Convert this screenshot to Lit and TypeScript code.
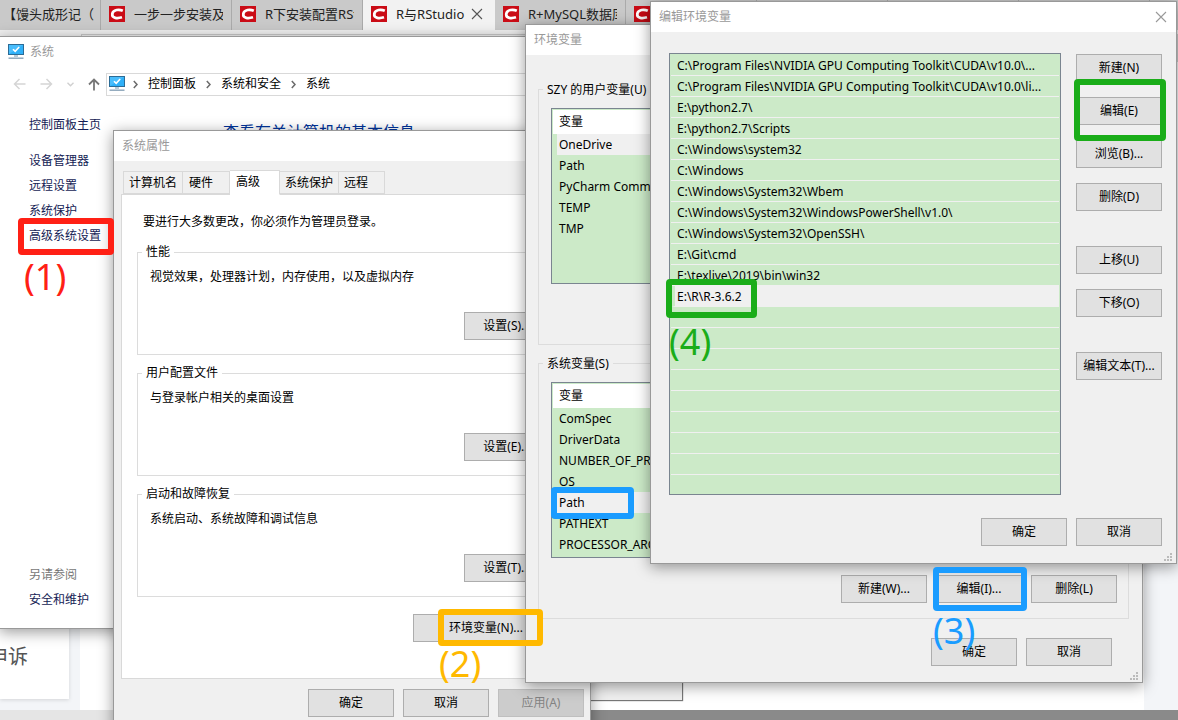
import { LitElement, html, css, svg } from "lit";
import { customElement } from "lit/decorators.js";
import { classMap } from "lit/directives/class-map.js";

const controls = css`
  * { box-sizing: border-box; }
  button { font: inherit; color: inherit; margin: 0; padding: 0; border: 0; background: none; white-space: nowrap; }
  .push { width: 86px; height: 28px; background: #e1e1e1; border: 1px solid #adadad; line-height: 24px; flex: none; }
  .push:disabled { background: #ccc; border-color: #bfbfbf; color: #838383; }
  .wide { width: 146px; }
  .title { height: 30px; background: #fff; display: flex; align-items: center; justify-content: space-between; padding: 0 9px 0 8px; color: #999; }
  h1 { font: inherit; margin: 0; }
  .row { display: flex; justify-content: flex-end; gap: 9px; }
  .grip { position: absolute; right: 3px; bottom: 1px; }
`;

const listStyle = css`
  .list { background: #cceac8; border: 1px solid #7a8590; padding: 1px; overflow: hidden; }
  .picked { background: #f0f0f0; border-left: 4px solid #cceac8; }
`;

const monitor = svg`<svg width="16" height="16" viewBox="0 0 16 16" aria-hidden="true">
  <rect x="0.5" y="0.5" width="15" height="10" fill="#2fb0f8" stroke="#2c6c96"/>
  <path d="M1 1h14L1 10z" fill="#5cc6ff" opacity=".6"/>
  <path d="M5 5.2l2.200 2.200L11.200 3" fill="none" stroke="#fff" stroke-width="1.6"/>
  <path d="M6 11h4v2H6z" fill="#b9cbd8"/><path d="M0.5 14.200h15" stroke="#8aa3b8" stroke-width="1.4"/>
</svg>`;

const csdn = svg`<svg width="16" height="16" viewBox="0 0 16 16" aria-hidden="true">
  <rect width="16" height="16" fill="#ca0c16"/>
  <path d="M13.800 4.700C10.500 3.200 4 3.200 3.300 7.800c-.7 4.800 5.400 4.800 9.700 3.500" fill="none" stroke="#fff" stroke-width="2.7"/>
</svg>`;

const crumb = svg`<svg width="5" height="9" viewBox="0 0 5 9" aria-hidden="true"><path d="M.8 1l3.200 3.500L.8 8" fill="none" stroke="#6b6b6b" stroke-width="1.5"/></svg>`;

const cross = (color: string) => svg`<svg width="12" height="12" viewBox="0 0 12 12" aria-hidden="true"><path d="M1 1l10 10M11 1L1 11" fill="none" stroke=${color} stroke-width="1.1"/></svg>`;

const grip = svg`<svg class="grip" width="9" height="9" viewBox="0 0 9 9" aria-hidden="true"><path fill="#bbb" d="M6 0h2v2H6zM3 3h2v2H3zM6 3h2v2H6zM0 6h2v2H0zM3 6h2v2H3zM6 6h2v2H6z"/></svg>`;

@customElement("browser-page")
class BrowserPage extends LitElement {
  static styles = [controls, css`
    :host { display: flex; flex-direction: column; height: 100%; background: #fff; }
    .tabs { display: flex; height: 30px; background: #c9c9c9; font-size: 13px; flex: none; overflow: hidden; }
    .tab { width: 131px; flex: none; height: 30px; display: flex; align-items: center; gap: 9px; padding: 0 8px 2px; border-right: 1px solid #aaa; color: #222; overflow: hidden; }
    .first { width: 101px; padding: 0 6px 2px 3px; }
    .active { width: 132px; background: #f2f2f2; border: 0; padding-right: 12px; }
    .label { flex: 1; overflow: hidden; text-align: left; }
    .active .label { overflow: visible; min-width: 0; }
    .tools { flex: none; height: 40px; background: #f0f0f0; padding: 4px 0 0 81px; }
    .address { height: 28px; border: 1px solid #c9c9c9; }
    .page { flex: 1; display: flex; min-height: 0; }
    .aside { width: 80px; background: #f3f5f8; padding-bottom: 11px; display: flex; }
    .card { width: 69px; background: #fff; box-shadow: 0 1px 4px #0002; display: flex; align-items: flex-end; justify-content: flex-end; padding: 0 41px 26px 0; font-size: 20px; line-height: 32px; color: #555; white-space: nowrap; }
    .article { flex: 1; display: flex; align-items: flex-end; padding: 0 0 9px 500px; }
    .frame { width: 103px; height: 60px; background: #f0f0f0; border: 1px solid #777; box-shadow: 0 0 1px #777; }
    .side { width: 34px; background: #f3f5f8; }
    .status { height: 10px; flex: none; display: flex; background: #8a8a8a; }
    .loaded { width: 30%; background: #e5e5e5; }
  `];
  render() {
    const tabs = ["一步一步安装及使用", "R下安装配置RStudio", "R与RStudio", "R+MySQL数据库", "R", "R", "R", "R"];
    return html`
      <nav class="tabs">
        <button class="tab first"><span class="label">【馒头成形记（</span></button>
        ${tabs.map((t) => html`<button class=${classMap({ tab: true, active: t === "R与RStudio" })}>
          ${csdn}<span class="label">${t}</span>${t === "R与RStudio" ? cross("#555") : ""}</button>`)}
      </nav>
      <div class="tools"><div class="address"></div></div>
      <div class="page">
        <div class="aside"><div class="card">申诉</div></div>
        <div class="article"><div class="frame"></div></div>
        <div class="side"></div>
      </div>
      <div class="status"><div class="loaded"></div></div>`;
  }
}

@customElement("system-window")
class SystemWindow extends LitElement {
  static styles = [controls, css`
    :host { display: flex; flex-direction: column; background: #fff; }
    .head { display: flex; align-items: center; gap: 6px; height: 30px; padding-left: 8px; color: #999; }
    .nav { display: flex; align-items: center; height: 34px; }
    .arrows { display: flex; align-items: center; gap: 14px; width: 106px; padding-left: 13px; }
    .path { flex: 1; height: 23px; border: 1px solid #d9d9d9; display: flex; align-items: center; gap: 10px; padding-left: 2px; line-height: 20px; }
    .lead { display: flex; align-items: center; gap: 8px; }
    .path a { color: #000; text-decoration: none; }
    .body { flex: 1; display: flex; padding: 11px 0 16px 29px; }
    .menu { width: 194px; display: flex; flex-direction: column; line-height: 25px; }
    .menu a { color: #151c55; text-decoration: none; }
    .home { margin-bottom: 11px; }
    .also { margin-top: auto; color: #777; }
    h2 { margin: 8px 0 0; font-size: 16px; font-weight: 400; line-height: 24px; color: #039; }
  `];
  render() {
    return html`
      <div class="head">${monitor}<h1>系统</h1></div>
      <div class="nav">
        <div class="arrows">
          <svg width="13" height="12" viewBox="0 0 13 12"><path d="M12.500 6H1.500M6.500 1l-5 5 5 5" fill="none" stroke="#d5d5d5" stroke-width="1.5"/></svg>
          <svg width="13" height="12" viewBox="0 0 13 12"><path d="M.5 6h11M6.500 1l5 5-5 5" fill="none" stroke="#d5d5d5" stroke-width="1.5"/></svg>
          <svg width="7" height="5" viewBox="0 0 7 5"><path d="M.5 .8l3 3 3-3" fill="none" stroke="#d0d0d0" stroke-width="1.4"/></svg>
          <svg width="12" height="13" viewBox="0 0 12 13"><path d="M6 12.500V1.500M1 6.500l5-5 5 5" fill="none" stroke="#777" stroke-width="1.8"/></svg>
        </div>
        <div class="path"><span class="lead">${monitor}${crumb}</span><a href="#">控制面板</a>${crumb}<a href="#">系统和安全</a>${crumb}<a href="#">系统</a></div>
      </div>
      <div class="body">
        <nav class="menu">
          <a class="home" href="#">控制面板主页</a><a href="#">设备管理器</a><a href="#">远程设置</a><a href="#">系统保护</a><a href="#">高级系统设置</a>
          <span class="also">另请参阅</span><a href="#">安全和维护</a>
        </nav>
        <h2>查看有关计算机的基本信息</h2>
      </div>`;
  }
}

@customElement("properties-window")
class PropertiesWindow extends LitElement {
  static styles = [controls, css`
    :host { display: block; background: #f0f0f0; }
    .tabs { display: flex; align-items: flex-end; padding: 9px 0 0 9px; height: 33px; }
    .tab { height: 23px; padding: 0 5px; border: 1px solid #d9d9d9; border-left: 0; line-height: 20px; text-align: left; }
    .tab:first-child { border-left: 1px solid #d9d9d9; }
    .hw { width: 47px; padding-left: 6px; }
    .tab.on { height: 25px; width: 50px; padding: 0 6px 2px; background: #fff; border-bottom-color: #fff; z-index: 1; margin-bottom: -1px; }
    .last { width: 46px; }
    .panel { margin: 0 7px; border: 1px solid #d9d9d9; background: #fff; padding: 17px 15px 36px; display: flex; flex-direction: column; gap: 18px; }
    p { margin: 0; line-height: 20px; }
    .intro { padding-left: 6px; margin-bottom: 2px; }
    .group { height: 103px; border: 1px solid #dcdcdc; padding: 14px 13px 14px 12px; display: flex; flex-direction: column; justify-content: space-between; position: relative; }
    .push { align-self: flex-end; }
    .group .push { margin-right: 3px; }
    .env { margin-right: 8px; margin-top: -1px; }
    .caption { position: absolute; top: -11px; left: 4px; padding: 0 4px; background: #fff; line-height: 20px; }
    .row { padding: 10px 6px 12px; }
  `];
  render() {
    const groups = [["性能", "视觉效果，处理器计划，内存使用，以及虚拟内存", "设置(S)..."], ["用户配置文件", "与登录帐户相关的桌面设置", "设置(E)..."], ["启动和故障恢复", "系统启动、系统故障和调试信息", "设置(T)..."]];
    return html`
      <div class="title"><h1>系统属性</h1></div>
      <div class="tabs" role="tablist">
        <button class="tab" role="tab">计算机名</button><button class="tab hw" role="tab">硬件</button><button class="tab on" role="tab" aria-selected="true">高级</button><button class="tab" role="tab">系统保护</button><button class="tab last" role="tab">远程</button>
      </div>
      <div class="panel">
        <p class="intro">要进行大多数更改，你必须作为管理员登录。</p>
        ${groups.map(([name, text, action]) => html`<section class="group" aria-label=${name}><span class="caption">${name}</span><p>${text}</p><button class="push">${action}</button></section>`)}
        <button class="push wide env">环境变量(N)...</button>
      </div>
      <div class="row"><button class="push">确定</button><button class="push">取消</button><button class="push" disabled>应用(A)</button></div>`;
  }
}

@customElement("variables-window")
class VariablesWindow extends LitElement {
  static styles = [controls, listStyle, css`
    :host { display: block; background: #f0f0f0; }
    .content { padding: 34px 13px 0 12px; display: flex; flex-direction: column; gap: 18px; }
    .group { height: 256px; border: 1px solid #dcdcdc; padding: 18px 11px 15px 12px; display: flex; flex-direction: column; justify-content: space-between; position: relative; }
    .caption { position: absolute; top: -10px; left: 4px; padding: 0 4px; background: #f0f0f0; line-height: 20px; }
    .list { height: 176px; }
    table { border-spacing: 0; width: 100%; }
    th { background: #fff; height: 24px; text-align: left; font-weight: 400; padding: 0 6px; }
    td { height: 21px; padding: 1px 6px 0; line-height: 20px; vertical-align: top; white-space: nowrap; }
    .picked { padding-left: 2px; }
    .foot { padding: 19px 30px 16px; }
  `];
  group(name: string, rows: string[], picked: string, tags: string[]) {
    return html`<section class="group" aria-label=${name}><span class="caption">${name}</span>
      <div class="list"><table><thead><tr><th>变量</th></tr></thead><tbody>
        ${rows.map((r) => html`<tr><td class=${classMap({ picked: r === picked })}>${r}</td></tr>`)}
      </tbody></table></div>
      <div class="row">${tags.map((t) => html`<button class="push">${t}</button>`)}</div></section>`;
  }
  render() {
    return html`
      <div class="title"><h1>环境变量</h1></div>
      <div class="content">
        ${this.group("SZY 的用户变量(U)", ["OneDrive", "Path", "PyCharm Community Edition", "TEMP", "TMP"], "OneDrive", ["新建(N)...", "编辑(E)...", "删除(D)"])}
        ${this.group("系统变量(S)", ["ComSpec", "DriverData", "NUMBER_OF_PROCESSORS", "OS", "Path", "PATHEXT", "PROCESSOR_ARCHITECTURE"], "Path", ["新建(W)...", "编辑(I)...", "删除(L)"])}
      </div>
      <div class="row foot"><button class="push">确定</button><button class="push">取消</button></div>${grip}`;
  }
}

@customElement("edit-window")
class EditWindow extends LitElement {
  static styles = [controls, listStyle, css`
    :host { display: block; background: #f0f0f0; }
    .content { display: flex; gap: 15px; padding: 21px 14px 0 18px; }
    .list { flex: 1; min-width: 0; height: 442px; margin: 0; list-style: none; }
    .item { height: 21px; padding: 1px 2px 0 6px; border-bottom: 1px solid #f0f0f0; line-height: 20px; white-space: nowrap; overflow: hidden; }
    .item.picked { padding-left: 2px; }
    .actions { display: flex; flex-direction: column; gap: 15px; padding-top: 1px; }
    .gap { margin-top: 20px; }
    .row { padding: 23px 14px 17px; }
    .close { display: flex; }
  `];
  render() {
    const paths = [
      "C:\\Program Files\\NVIDIA GPU Computing Toolkit\\CUDA\\v10.0\\...", "C:\\Program Files\\NVIDIA GPU Computing Toolkit\\CUDA\\v10.0\\li...",
      "E:\\python2.7\\", "E:\\python2.7\\Scripts", "C:\\Windows\\system32", "C:\\Windows", "C:\\Windows\\System32\\Wbem",
      "C:\\Windows\\System32\\WindowsPowerShell\\v1.0\\", "C:\\Windows\\System32\\OpenSSH\\", "E:\\Git\\cmd", "E:\\texlive\\2019\\bin\\win32", "E:\\R\\R-3.6.2",
      "", "", "", "", "", "", "", "",
    ];
    return html`
      <div class="title"><h1>编辑环境变量</h1><button class="close" aria-label="关闭">${cross("#999")}</button></div>
      <div class="content">
        <ul class="list">${paths.map((p, i) => html`<li class=${classMap({ item: true, picked: i === 11 })}>${p}</li>`)}</ul>
        <div class="actions">
          <button class="push">新建(N)</button><button class="push">编辑(E)</button><button class="push">浏览(B)...</button><button class="push">删除(D)</button>
          <button class="push gap">上移(U)</button><button class="push">下移(O)</button><button class="push gap">编辑文本(T)...</button>
        </div>
      </div>
      <div class="row"><button class="push">确定</button><button class="push">取消</button></div>${grip}`;
  }
}

@customElement("app-root")
class AppRoot extends LitElement {
  static styles = css`
    :host { display: block; position: relative; height: 100vh; overflow: hidden; font: 12px/16px "Noto Sans", "Noto Sans CJK SC", sans-serif; color: #000; }
    .win { position: absolute; box-sizing: border-box; border: 1px solid #999; box-shadow: 0 3px 14px rgba(0, 0, 0, 0.4); }
    .system { left: -1px; top: 36px; width: 700px; height: 593px; }
    .props { left: 113px; top: 130px; width: 478px; }
    .vars { left: 525px; top: 24px; width: 618px; }
    .edit { left: 650px; top: 1px; width: 527px; }
    .mark { position: absolute; box-sizing: border-box; border: 6px solid; border-radius: 4px; }
    .step { position: absolute; font-size: 36px; line-height: 40px; }
    .red { color: #ff2015; }
    .amber { color: #ffb900; }
    .blue { color: #1a9cff; }
    .green { color: #1aad19; }
    .m1 { left: 18px; top: 218px; width: 96px; height: 37px; }
    .m2 { left: 438px; top: 609px; width: 105px; height: 37px; }
    .m3 { left: 933px; top: 567px; width: 94px; height: 44px; }
    .m4 { left: 666px; top: 279px; width: 91px; height: 39px; }
    .m5 { left: 1074px; top: 79px; width: 92px; height: 62px; }
    .m6 { left: 551px; top: 487px; width: 83px; height: 32px; }
    .s1 { left: 24px; top: 257px; }
    .s2 { left: 439px; top: 644px; }
    .s3 { left: 933px; top: 611px; }
    .s4 { left: 669px; top: 322px; }
  `;
  render() {
    return html`
      <browser-page></browser-page>
      <system-window class="win system"></system-window>
      <properties-window class="win props"></properties-window>
      <variables-window class="win vars"></variables-window>
      <edit-window class="win edit"></edit-window>
      <div class="mark red m1"></div><div class="step red s1">(1)</div>
      <div class="mark amber m2"></div><div class="step amber s2">(2)</div>
      <div class="mark blue m3"></div><div class="step blue s3">(3)</div>
      <div class="mark green m4"></div><div class="step green s4">(4)</div>
      <div class="mark green m5"></div><div class="mark blue m6"></div>`;
  }
}
